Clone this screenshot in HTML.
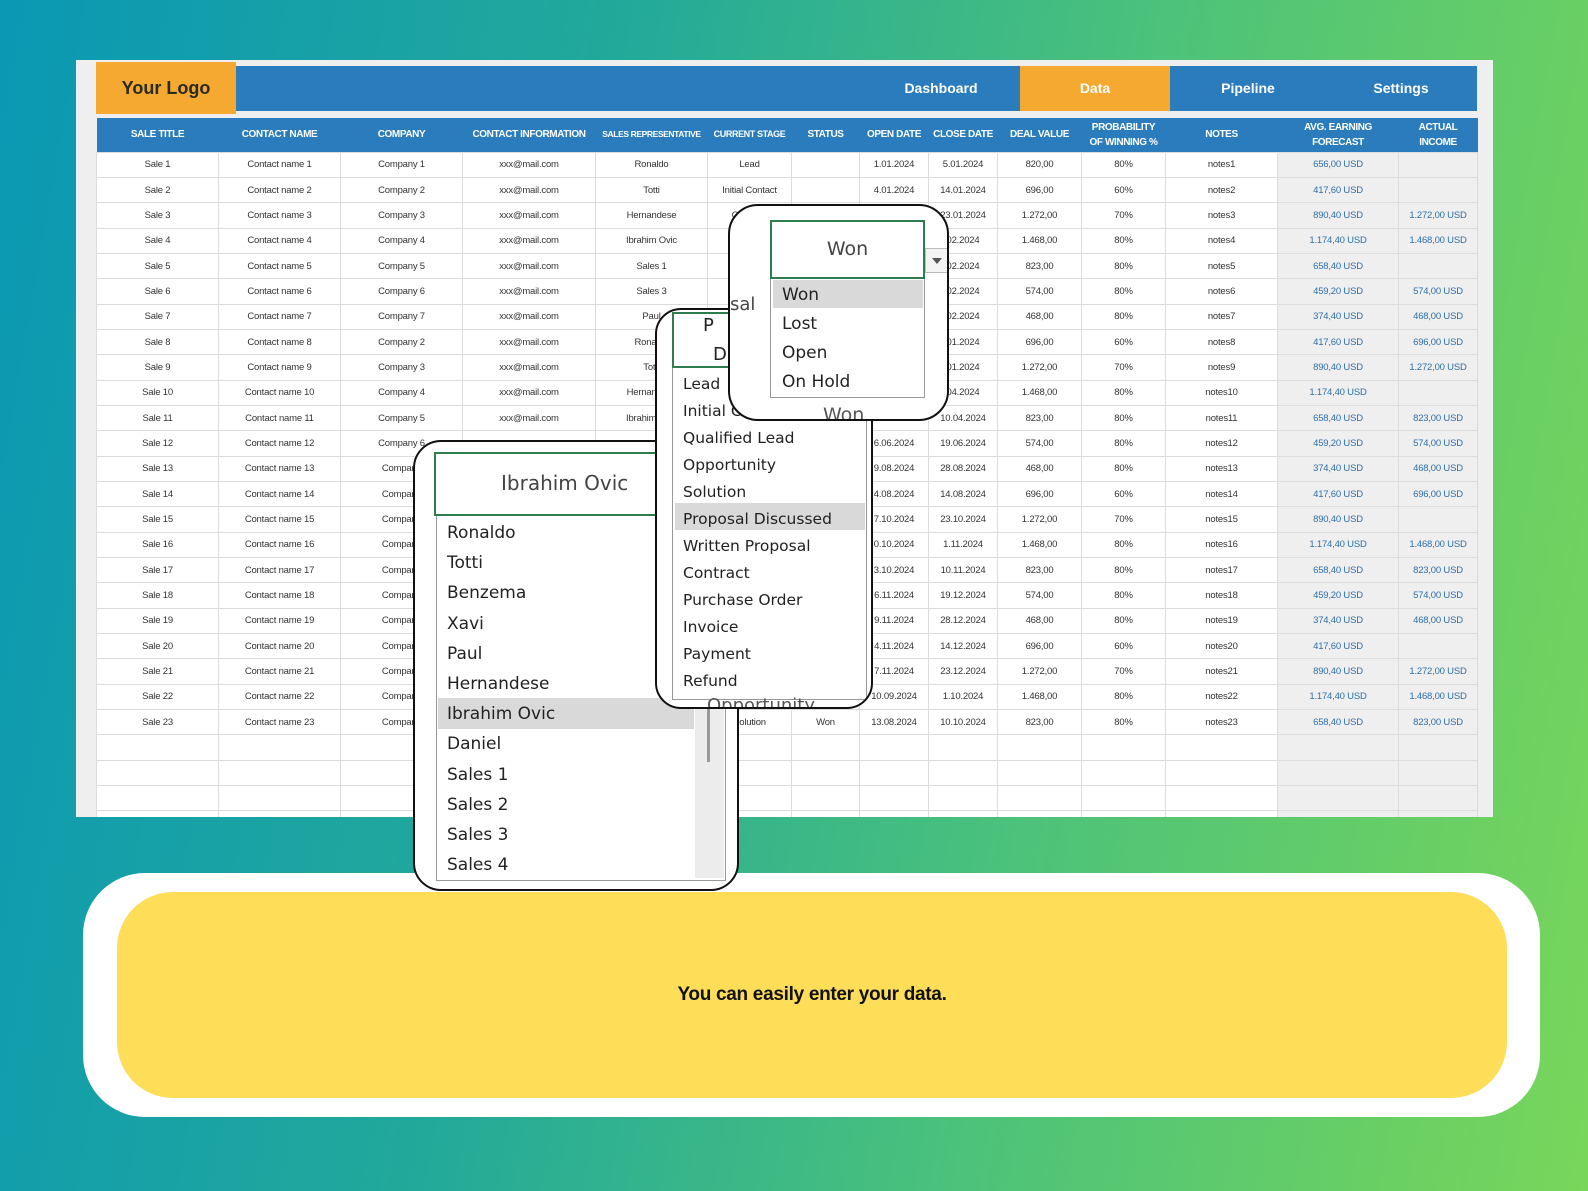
<!DOCTYPE html>
<html><head><meta charset="utf-8">
<style>
*{margin:0;padding:0;box-sizing:border-box}
body{width:1588px;height:1191px;overflow:hidden;position:relative;background:linear-gradient(100deg,#0a98b4 0%,#23a99a 35%,#4cc27a 65%,#78d65a 100%);font-family:"Liberation Sans",sans-serif}
.panel{position:absolute;left:76px;top:60px;width:1417px;height:757px;background:#efefef;overflow:hidden}
.bar{position:absolute;left:20px;top:6px;width:1381px;height:45px;background:#2a7cbd}
.logo{position:absolute;left:20px;top:2px;width:140px;height:52px;background:#f5a930;color:#2a2a1e;font-weight:bold;font-size:18px;line-height:52px;text-align:center}
.tab{position:absolute;top:6px;height:45px;line-height:45px;color:#fff;font-weight:bold;font-size:14px;text-align:center}
table{position:absolute;left:20px;top:58px;border-collapse:collapse;table-layout:fixed}
th{background:#2a7cbd;color:#fff;font-size:10px;letter-spacing:-0.4px;font-weight:bold;height:34px;line-height:15px;text-align:center;padding:0;white-space:nowrap;overflow:hidden}
td{background:#fff;height:25.35px;font-size:9.5px;letter-spacing:-0.2px;color:#333;text-align:center;border:1px solid #dcdcdc;padding:0;white-space:nowrap;overflow:hidden}
td.g{background:#efefef;color:#2f6ea8}
.pop{position:absolute;border:2.5px solid #111;background:#fff;overflow:hidden}
.it{position:absolute;font-family:"DejaVu Sans",sans-serif;color:#222;white-space:nowrap}
.yel{position:absolute;left:117px;top:892px;width:1390px;height:206px;background:#fedd59;border-radius:56px;text-align:center;line-height:206px;font-weight:bold;font-size:19px;color:#111;letter-spacing:-0.3px}
</style></head><body>
<div class="panel">
<div class="bar"></div>
<div class="logo">Your Logo</div>
<div class="tab" style="left:790px;width:150px">Dashboard</div>
<div class="tab" style="left:944px;width:150px;background:#f5a930">Data</div>
<div class="tab" style="left:1097px;width:150px">Pipeline</div>
<div class="tab" style="left:1250px;width:150px">Settings</div>
<table>
<colgroup><col style="width:122px"><col style="width:122px"><col style="width:122px"><col style="width:133px"><col style="width:112px"><col style="width:84px"><col style="width:68px"><col style="width:69px"><col style="width:69px"><col style="width:84px"><col style="width:84px"><col style="width:112px"><col style="width:121px"><col style="width:79px"></colgroup>
<tr><th>SALE TITLE</th><th>CONTACT NAME</th><th>COMPANY</th><th>CONTACT INFORMATION</th><th style="font-size:8.5px">SALES REPRESENTATIVE</th><th style="font-size:9px">CURRENT STAGE</th><th>STATUS</th><th>OPEN DATE</th><th>CLOSE DATE</th><th>DEAL VALUE</th><th>PROBABILITY<br>OF WINNING %</th><th>NOTES</th><th>AVG. EARNING<br>FORECAST</th><th>ACTUAL<br>INCOME</th></tr>
<tr><td>Sale 1</td><td>Contact name 1</td><td>Company 1</td><td>xxx@mail.com</td><td>Ronaldo</td><td>Lead</td><td></td><td>1.01.2024</td><td>5.01.2024</td><td>820,00</td><td>80%</td><td>notes1</td><td class="g">656,00 USD</td><td class="g"></td></tr>
<tr><td>Sale 2</td><td>Contact name 2</td><td>Company 2</td><td>xxx@mail.com</td><td>Totti</td><td>Initial Contact</td><td></td><td>4.01.2024</td><td>14.01.2024</td><td>696,00</td><td>60%</td><td>notes2</td><td class="g">417,60 USD</td><td class="g"></td></tr>
<tr><td>Sale 3</td><td>Contact name 3</td><td>Company 3</td><td>xxx@mail.com</td><td>Hernandese</td><td>Qualified</td><td></td><td></td><td>23.01.2024</td><td>1.272,00</td><td>70%</td><td>notes3</td><td class="g">890,40 USD</td><td class="g">1.272,00 USD</td></tr>
<tr><td>Sale 4</td><td>Contact name 4</td><td>Company 4</td><td>xxx@mail.com</td><td>Ibrahim Ovic</td><td>Opp</td><td></td><td></td><td>02.2024</td><td>1.468,00</td><td>80%</td><td>notes4</td><td class="g">1.174,40 USD</td><td class="g">1.468,00 USD</td></tr>
<tr><td>Sale 5</td><td>Contact name 5</td><td>Company 5</td><td>xxx@mail.com</td><td>Sales 1</td><td></td><td></td><td></td><td>02.2024</td><td>823,00</td><td>80%</td><td>notes5</td><td class="g">658,40 USD</td><td class="g"></td></tr>
<tr><td>Sale 6</td><td>Contact name 6</td><td>Company 6</td><td>xxx@mail.com</td><td>Sales 3</td><td></td><td></td><td></td><td>02.2024</td><td>574,00</td><td>80%</td><td>notes6</td><td class="g">459,20 USD</td><td class="g">574,00 USD</td></tr>
<tr><td>Sale 7</td><td>Contact name 7</td><td>Company 7</td><td>xxx@mail.com</td><td>Paul</td><td></td><td></td><td></td><td>02.2024</td><td>468,00</td><td>80%</td><td>notes7</td><td class="g">374,40 USD</td><td class="g">468,00 USD</td></tr>
<tr><td>Sale 8</td><td>Contact name 8</td><td>Company 2</td><td>xxx@mail.com</td><td>Ronaldo</td><td></td><td></td><td></td><td>01.2024</td><td>696,00</td><td>60%</td><td>notes8</td><td class="g">417,60 USD</td><td class="g">696,00 USD</td></tr>
<tr><td>Sale 9</td><td>Contact name 9</td><td>Company 3</td><td>xxx@mail.com</td><td>Totti</td><td></td><td></td><td></td><td>01.2024</td><td>1.272,00</td><td>70%</td><td>notes9</td><td class="g">890,40 USD</td><td class="g">1.272,00 USD</td></tr>
<tr><td>Sale 10</td><td>Contact name 10</td><td>Company 4</td><td>xxx@mail.com</td><td>Hernandese</td><td></td><td></td><td></td><td>04.2024</td><td>1.468,00</td><td>80%</td><td>notes10</td><td class="g">1.174,40 USD</td><td class="g"></td></tr>
<tr><td>Sale 11</td><td>Contact name 11</td><td>Company 5</td><td>xxx@mail.com</td><td>Ibrahim Ovic</td><td></td><td></td><td></td><td>10.04.2024</td><td>823,00</td><td>80%</td><td>notes11</td><td class="g">658,40 USD</td><td class="g">823,00 USD</td></tr>
<tr><td>Sale 12</td><td>Contact name 12</td><td>Company 6</td><td></td><td></td><td></td><td></td><td>6.06.2024</td><td>19.06.2024</td><td>574,00</td><td>80%</td><td>notes12</td><td class="g">459,20 USD</td><td class="g">574,00 USD</td></tr>
<tr><td>Sale 13</td><td>Contact name 13</td><td>Company</td><td></td><td></td><td></td><td></td><td>9.08.2024</td><td>28.08.2024</td><td>468,00</td><td>80%</td><td>notes13</td><td class="g">374,40 USD</td><td class="g">468,00 USD</td></tr>
<tr><td>Sale 14</td><td>Contact name 14</td><td>Company</td><td></td><td></td><td></td><td></td><td>4.08.2024</td><td>14.08.2024</td><td>696,00</td><td>60%</td><td>notes14</td><td class="g">417,60 USD</td><td class="g">696,00 USD</td></tr>
<tr><td>Sale 15</td><td>Contact name 15</td><td>Company</td><td></td><td></td><td></td><td></td><td>7.10.2024</td><td>23.10.2024</td><td>1.272,00</td><td>70%</td><td>notes15</td><td class="g">890,40 USD</td><td class="g"></td></tr>
<tr><td>Sale 16</td><td>Contact name 16</td><td>Company</td><td></td><td></td><td></td><td></td><td>0.10.2024</td><td>1.11.2024</td><td>1.468,00</td><td>80%</td><td>notes16</td><td class="g">1.174,40 USD</td><td class="g">1.468,00 USD</td></tr>
<tr><td>Sale 17</td><td>Contact name 17</td><td>Company</td><td></td><td></td><td></td><td></td><td>3.10.2024</td><td>10.11.2024</td><td>823,00</td><td>80%</td><td>notes17</td><td class="g">658,40 USD</td><td class="g">823,00 USD</td></tr>
<tr><td>Sale 18</td><td>Contact name 18</td><td>Company</td><td></td><td></td><td></td><td></td><td>6.11.2024</td><td>19.12.2024</td><td>574,00</td><td>80%</td><td>notes18</td><td class="g">459,20 USD</td><td class="g">574,00 USD</td></tr>
<tr><td>Sale 19</td><td>Contact name 19</td><td>Company</td><td></td><td></td><td></td><td></td><td>9.11.2024</td><td>28.12.2024</td><td>468,00</td><td>80%</td><td>notes19</td><td class="g">374,40 USD</td><td class="g">468,00 USD</td></tr>
<tr><td>Sale 20</td><td>Contact name 20</td><td>Company</td><td></td><td></td><td></td><td></td><td>4.11.2024</td><td>14.12.2024</td><td>696,00</td><td>60%</td><td>notes20</td><td class="g">417,60 USD</td><td class="g"></td></tr>
<tr><td>Sale 21</td><td>Contact name 21</td><td>Company</td><td></td><td></td><td></td><td></td><td>7.11.2024</td><td>23.12.2024</td><td>1.272,00</td><td>70%</td><td>notes21</td><td class="g">890,40 USD</td><td class="g">1.272,00 USD</td></tr>
<tr><td>Sale 22</td><td>Contact name 22</td><td>Company</td><td></td><td></td><td></td><td></td><td>10.09.2024</td><td>1.10.2024</td><td>1.468,00</td><td>80%</td><td>notes22</td><td class="g">1.174,40 USD</td><td class="g">1.468,00 USD</td></tr>
<tr><td>Sale 23</td><td>Contact name 23</td><td>Company</td><td></td><td></td><td>Solution</td><td>Won</td><td>13.08.2024</td><td>10.10.2024</td><td>823,00</td><td>80%</td><td>notes23</td><td class="g">658,40 USD</td><td class="g">823,00 USD</td></tr>
<tr><td></td><td></td><td></td><td></td><td></td><td></td><td></td><td></td><td></td><td></td><td></td><td></td><td class="g"></td><td class="g"></td></tr>
<tr><td></td><td></td><td></td><td></td><td></td><td></td><td></td><td></td><td></td><td></td><td></td><td></td><td class="g"></td><td class="g"></td></tr>
<tr><td></td><td></td><td></td><td></td><td></td><td></td><td></td><td></td><td></td><td></td><td></td><td></td><td class="g"></td><td class="g"></td></tr>
<tr><td></td><td></td><td></td><td></td><td></td><td></td><td></td><td></td><td></td><td></td><td></td><td></td><td class="g"></td><td class="g"></td></tr>
</table>
</div>

<div style="position:absolute;left:83px;top:873px;width:1457px;height:244px;background:#fff;border-radius:62px"></div>
<div class="yel">You can easily enter your data.</div>

<!-- Rep popup -->
<div class="pop" style="left:413px;top:440px;width:326px;height:451px;border-radius:28px">
  <div style="position:absolute;left:19px;top:10px;width:300px;height:64px;border:2.5px solid #2e7d4e;border-right:none"></div>
  <div class="it" style="left:86px;top:29px;font-size:20px;color:#444">Ibrahim Ovic</div>
  <div style="position:absolute;left:21px;top:74px;width:290px;height:365px;border:1.5px solid #999;border-top:none"></div>
  <div style="position:absolute;left:280px;top:74px;width:29px;height:362px;background:#ececec"></div>
  <div style="position:absolute;left:292px;top:262px;width:3px;height:58px;background:#999"></div>
  <div style="position:absolute;left:23px;top:256px;width:256px;height:31px;background:#d9d9d9"></div>
  <div class="it" style="left:32px;top:76px;font-size:17px;line-height:30.2px">Ronaldo<br>Totti<br>Benzema<br>Xavi<br>Paul<br>Hernandese<br>Ibrahim Ovic<br>Daniel<br>Sales 1<br>Sales 2<br>Sales 3<br>Sales 4</div>
</div>

<!-- Stage popup -->
<div class="pop" style="left:655px;top:308px;width:218px;height:401px;border-radius:26px">
  <div style="position:absolute;left:15px;top:2px;width:80px;height:56px;border:2px solid #2e7d4e"></div>
  <div class="it" style="left:46px;top:5px;font-size:18px">P</div>
  <div class="it" style="left:56px;top:34px;font-size:18px">D</div>
  <div style="position:absolute;left:15px;top:58px;width:195px;height:332px;border:1.5px solid #999;border-top:none"></div>
  <div style="position:absolute;left:18px;top:193px;width:190px;height:27px;background:#d9d9d9"></div>
  <div class="it" style="left:26px;top:61px;font-size:15.5px;line-height:27px">Lead<br>Initial C<br>Qualified Lead<br>Opportunity<br>Solution<br>Proposal Discussed<br>Written Proposal<br>Contract<br>Purchase Order<br>Invoice<br>Payment<br>Refund</div>
  <div class="it" style="left:50px;top:385px;font-size:18px;color:#555">Opportunity</div>
</div>

<!-- Won popup -->
<div class="pop" style="left:728px;top:204px;width:221px;height:217px;border-radius:30px">
  <div class="it" style="left:0px;top:88px;font-size:18px;color:#444">sal</div>
  <div style="position:absolute;left:40px;top:14px;width:155px;height:59px;border:2.5px solid #2e7d4e;text-align:center;line-height:54px;font-family:'DejaVu Sans',sans-serif;font-size:19px;color:#444">Won</div>
  <div style="position:absolute;left:195px;top:42px;width:24px;height:25px;border:1px solid #bbb;background:#f4f4f4"><div style="margin:9px auto 0;width:0;height:0;border-left:5px solid transparent;border-right:5px solid transparent;border-top:6px solid #555"></div></div>
  <div style="position:absolute;left:40px;top:73px;width:155px;height:119px;border:1.5px solid #999;border-top:none"></div>
  <div style="position:absolute;left:43px;top:74px;width:150px;height:28px;background:#d9d9d9"></div>
  <div class="it" style="left:52px;top:75px;font-size:17px;line-height:29px">Won<br>Lost<br>Open<br>On Hold</div>
  <div class="it" style="left:93px;top:198px;font-size:19px;color:#555">Won</div>
</div>
</body></html>
